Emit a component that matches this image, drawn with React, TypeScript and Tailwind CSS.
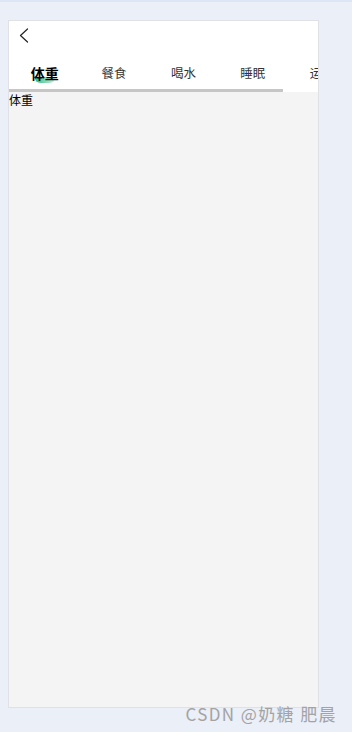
const tabs = ["体重", "餐食", "喝水", "睡眠", "运动"];

function BackIcon() {
  return (
    <svg width="10" height="15" viewBox="0 0 10 15" fill="none">
      <path d="M8.5 1 L1.5 7.5 L8.5 14" stroke="#222" strokeWidth="1.2" strokeLinecap="round" strokeLinejoin="round" />
    </svg>
  );
}

export default function App() {
  const active = 0;

  return (
    <div
      className="relative h-[732px] w-[352px] overflow-hidden border-t-2 border-[#dde6f7] bg-[#ebeff8]"
      style={{ fontFamily: '"Noto Sans CJK SC", "Liberation Sans", sans-serif' }}
    >
      {/* phone frame */}
      <div className="ml-2 mt-[18px] flex h-[688px] w-[311px] flex-col overflow-hidden border border-[#dfe1e6] bg-[#f4f4f4]">
        <div className="bg-white">
          <div className="h-[34px] pl-[10px] pt-[7px]">
            <BackIcon />
          </div>

          {/* tabs */}
          <div className="overflow-hidden">
            <div className="flex w-[348px] pl-[1px]">
              {tabs.map((t, i) => (
                <div key={t} className="relative flex h-[34px] w-[69.4px] shrink-0 items-center justify-center pt-[2px]">
                  {i === active && (
                    <span className="absolute left-1/2 top-[22px] h-[6px] w-[21px] -translate-x-1/2 rounded-b-full bg-gradient-to-r from-[#10b981] to-[#c6f3df]" />
                  )}
                  <span
                    className={
                      i === active
                        ? "relative text-[14px] font-bold text-black"
                        : "text-[12.5px] text-[#333]"
                    }
                  >
                    {t}
                  </span>
                </div>
              ))}
            </div>
          </div>
          <div className="h-[3px] w-[274px] bg-[#c6c6c6]" />
        </div>

        <div className="text-[12px] leading-[16px] text-black">体重</div>
      </div>

      <div className="absolute bottom-[8px] right-[15px] text-[17px] leading-[20px] tracking-[1.4px] text-[#a3a3a3]">
        CSDN @奶糖 肥晨
      </div>
    </div>
  );
}
